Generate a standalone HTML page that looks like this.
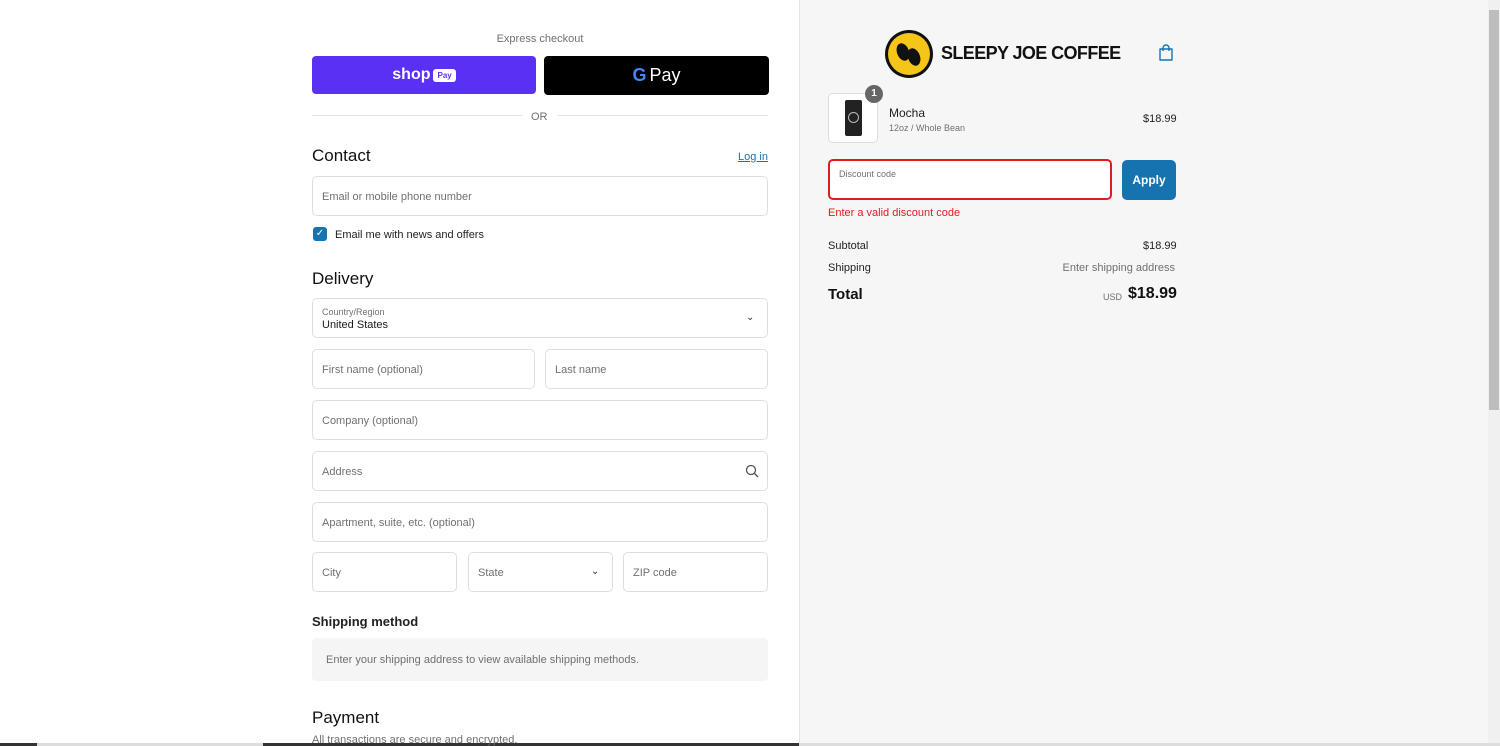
<!DOCTYPE html>
<html><head><style>
*{box-sizing:border-box;margin:0;padding:0}
body{width:1500px;height:746px;overflow:hidden;position:relative;background:#fff;font-family:"Liberation Sans",sans-serif;color:#1a1a1a}
.a{position:absolute}
.inp{position:absolute;border:1px solid #dedede;border-radius:5px;background:#fff;font-size:11px;color:#707070;padding-left:9px;padding-top:2px;display:flex;align-items:center}
h2{position:absolute;font-size:17px;font-weight:normal;color:#111}
</style></head><body>
<div class="a" style="left:799px;top:0;width:689px;height:746px;background:#f6f6f6;border-left:1px solid #e3e3e3"></div>
<div class="a" style="left:1488px;top:0;width:12px;height:746px;background:#f0f0f0"></div>
<div class="a" style="left:1489px;top:10px;width:10px;height:400px;background:#bdbdbd"></div>
<div class="a" style="left:0;top:743px;width:1500px;height:3px;background:#ddd"></div>
<div class="a" style="left:0;top:743px;width:37px;height:3px;background:#333"></div>
<div class="a" style="left:263px;top:743px;width:536px;height:3px;background:#333"></div>

<div class="a" style="left:312px;top:33px;width:456px;text-align:center;font-size:11px;color:#707070">Express checkout</div>
<div class="a" style="left:312px;top:56px;width:224px;height:38px;background:#5a31f4;border-radius:4px;color:#fff;display:flex;align-items:center;justify-content:center;font-weight:bold;font-size:16px">shop<span style="background:#fff;color:#5a31f4;font-size:8px;padding:2px 4px;border-radius:3px;margin-left:3px">Pay</span></div>
<div class="a" style="left:544px;top:56px;width:225px;height:39px;background:#000;border-radius:4px;color:#fff;display:flex;align-items:center;justify-content:center;font-size:18px"><span style="font-weight:bold;color:#4285f4;margin-right:3px">G</span>Pay</div>
<div class="a" style="left:312px;top:115px;width:210px;height:1px;background:#e3e3e3"></div>
<div class="a" style="left:558px;top:115px;width:210px;height:1px;background:#e3e3e3"></div>
<div class="a" style="left:531px;top:111px;font-size:11px;color:#707070">OR</div>

<h2 style="left:312px;top:146px">Contact</h2>
<div class="a" style="left:738px;top:151px;font-size:11px;color:#1773b0;text-decoration:underline">Log in</div>
<div class="inp" style="left:312px;top:176px;width:456px;height:40px">Email or mobile phone number</div>
<div class="a" style="left:313px;top:227px;width:14px;height:14px;background:#1773b0;border-radius:3px;color:#fff;font-size:10px;text-align:center;line-height:14px">✓</div>
<div class="a" style="left:335px;top:229px;font-size:11px;color:#222">Email me with news and offers</div>

<h2 style="left:312px;top:269px">Delivery</h2>
<div class="inp" style="left:312px;top:298px;width:456px;height:40px;display:block;padding-top:8px"><div style="font-size:9px">Country/Region</div><div style="font-size:11px;color:#1a1a1a;margin-top:2px">United States</div></div>
<div class="a" style="left:746px;top:312px;font-size:10px;color:#333">⌄</div>
<div class="inp" style="left:312px;top:349px;width:223px;height:40px">First name (optional)</div>
<div class="inp" style="left:545px;top:349px;width:223px;height:40px">Last name</div>
<div class="inp" style="left:312px;top:400px;width:456px;height:40px">Company (optional)</div>
<div class="inp" style="left:312px;top:451px;width:456px;height:40px">Address</div>
<svg class="a" style="left:745px;top:464px" width="14" height="14"><circle cx="6" cy="6" r="4.5" fill="none" stroke="#555" stroke-width="1.3"/><path d="M9.5 9.5L13 13" stroke="#555" stroke-width="1.3"/></svg>
<div class="inp" style="left:312px;top:502px;width:456px;height:40px">Apartment, suite, etc. (optional)</div>
<div class="inp" style="left:312px;top:552px;width:145px;height:40px">City</div>
<div class="inp" style="left:468px;top:552px;width:145px;height:40px">State</div>
<div class="a" style="left:591px;top:566px;font-size:10px;color:#333">⌄</div>
<div class="inp" style="left:623px;top:552px;width:145px;height:40px">ZIP code</div>

<div class="a" style="left:312px;top:614px;font-size:13px;font-weight:bold;color:#222">Shipping method</div>
<div class="a" style="left:312px;top:638px;width:456px;height:43px;background:#f5f5f5;border-radius:4px;font-size:11px;color:#707070;padding:16px 0 0 14px">Enter your shipping address to view available shipping methods.</div>
<h2 style="left:312px;top:708px">Payment</h2>
<div class="a" style="left:312px;top:734px;font-size:11px;color:#707070">All transactions are secure and encrypted.</div>

<svg class="a" style="left:884px;top:29px" width="50" height="50"><circle cx="25" cy="25" r="24" fill="#111"/><circle cx="25" cy="25" r="21" fill="#f5c518"/><ellipse cx="19" cy="23" rx="6" ry="9" fill="#111" transform="rotate(-20 19 23)"/><ellipse cx="30" cy="28" rx="6" ry="9" fill="#111" transform="rotate(-20 30 28)"/></svg>
<div class="a" style="left:941px;top:43px;font-size:18px;font-weight:900;letter-spacing:-0.6px;color:#111">SLEEPY JOE COFFEE</div>
<svg class="a" style="left:1158px;top:44px" width="16" height="18"><path d="M2 5h12v11H2z" fill="none" stroke="#1773b0" stroke-width="1.4" stroke-linejoin="round"/><path d="M5 7V4a3 3 0 0 1 6 0v3" fill="none" stroke="#1773b0" stroke-width="1.4"/></svg>

<div class="a" style="left:828px;top:93px;width:50px;height:50px;background:#fff;border:1px solid #ddd;border-radius:5px"></div>
<div class="a" style="left:845px;top:100px;width:17px;height:36px;background:#222;border-radius:2px"></div>
<div class="a" style="left:848px;top:112px;width:11px;height:11px;border:1px solid #bbb;border-radius:50%"></div>
<div class="a" style="left:865px;top:85px;width:18px;height:18px;background:#666;border-radius:50%;color:#fff;font-size:10px;font-weight:bold;text-align:center;line-height:18px">1</div>
<div class="a" style="left:889px;top:106px;font-size:12px;color:#222">Mocha</div>
<div class="a" style="left:889px;top:123px;font-size:9px;color:#707070">12oz / Whole Bean</div>
<div class="a" style="left:1143px;top:113px;font-size:11px;color:#222">$18.99</div>

<div class="a" style="left:828px;top:159px;width:284px;height:41px;border:2px solid #dd1d1d;border-radius:5px;background:#fff;font-size:9px;color:#707070;padding:8px 0 0 9px">Discount code</div>
<div class="a" style="left:1122px;top:160px;width:54px;height:40px;background:#1773b0;border-radius:5px;color:#fff;font-weight:bold;font-size:12px;text-align:center;line-height:40px">Apply</div>
<div class="a" style="left:828px;top:207px;font-size:11px;color:#dd1d1d">Enter a valid discount code</div>

<div class="a" style="left:828px;top:240px;font-size:11px;color:#222">Subtotal</div>
<div class="a" style="left:1143px;top:240px;font-size:11px;color:#222">$18.99</div>
<div class="a" style="left:828px;top:262px;font-size:11px;color:#222">Shipping</div>
<div class="a" style="right:325px;top:262px;font-size:11px;color:#707070">Enter shipping address</div>
<div class="a" style="left:828px;top:286px;font-size:15px;font-weight:bold;color:#111">Total</div>
<div class="a" style="left:1103px;top:292px;font-size:9px;color:#707070">USD</div>
<div class="a" style="left:1128px;top:285px;font-size:16px;font-weight:bold;color:#111">$18.99</div>
</body></html>
